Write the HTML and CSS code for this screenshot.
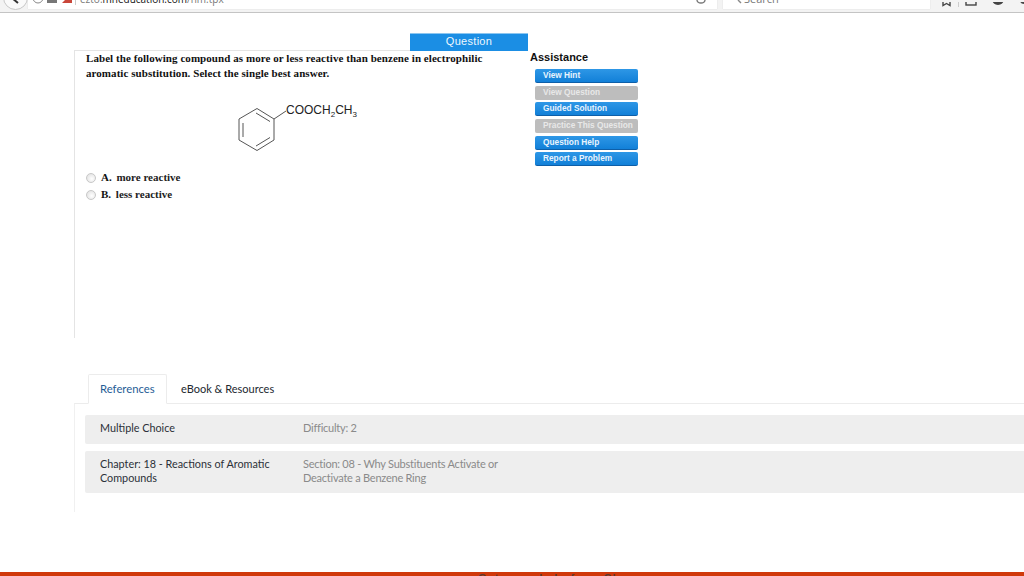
FILE: index.html
```html
<!DOCTYPE html>
<html lang="en">
<head>
<meta charset="utf-8">
<title>Question</title>
<link rel="stylesheet" href="styles.css">
</head>
<body>
<header class="toolbar">
  <div class="nav-back"><svg class="nav-arrow" width="14" height="14" viewBox="0 0 14 14"><path d="M9 -4 L3 1 L9 6" fill="none" stroke="#333" stroke-width="2"/></svg></div>
  <div class="url-box">
    <svg class="site-icons" width="50" height="9" viewBox="0 0 50 9"><circle cx="10" cy="-2" r="5" fill="none" stroke="#888"/><rect x="19" y="-3" width="10" height="6" fill="#777"/><path d="M34 3 L39 -2 L44 -3 V3 Z" fill="#c9463a"/><path d="M47.500 0 V5" stroke="#ccc"/></svg>
    <span class="url-text"><span class="url-dim">ezto.</span>mheducation.com<span class="url-dim">/hm.tpx</span></span>
    <svg class="reload" width="12" height="9" viewBox="0 0 12 9"><path d="M2 0 A4 3 0 0 0 10 0" fill="none" stroke="#777" stroke-width="1.4"/></svg>
  </div>
  <div class="search-box">
    <svg class="magnifier" width="10" height="9" viewBox="0 0 10 9"><path d="M5 0 L8 3" stroke="#888" stroke-width="1.4"/></svg>
    <span class="search-text">Search</span>
  </div>
  <div class="tool-icons">
    <svg width="82" height="12" viewBox="0 0 82 12"><path d="M1 -2 V3.500 L4.500 1.500 L8 3.500 V-2" fill="none" stroke="#444" stroke-width="1.4"/><path d="M16.500 0 V5" stroke="#ccc"/><rect x="24" y="-4" width="10" height="7" fill="none" stroke="#444" stroke-width="1.4"/><circle cx="56" cy="-3" r="6" fill="#444"/><circle cx="82" cy="-2" r="4" fill="#444"/></svg>
  </div>
</header>

<main class="page">
  <section class="question-area">
    <div class="question-col">
      <div class="tab-row"><div class="question-tab">Question</div></div>
      <div class="question-panel">
        <p class="prompt">Label the following compound as more or less reactive than benzene in electrophilic aromatic substitution. Select the single best answer.</p>
        <div class="structure">
          <svg width="150" height="52" viewBox="0 0 150 52">
            <g fill="none" stroke="#555" stroke-width="1">
              <path d="M19 14 L37 3.500 L54 14 L54 35 L37 45.500 L19 35 Z"/>
              <path d="M36 8 L50 16.500"/>
              <path d="M23 18 L23 32"/>
              <path d="M36 41 L50 32.500"/>
              <path d="M54 14 L66 6"/>
            </g>
            <text x="66" y="9" class="formula">COOCH<tspan class="sub" dy="3">2</tspan><tspan dy="-3">CH</tspan><tspan class="sub" dy="3">3</tspan></text>
          </svg>
        </div>
        <ul class="choices">
          <li class="choice"><span class="radio"></span><b class="choice-key">A.</b> more reactive</li>
          <li class="choice"><span class="radio"></span><b class="choice-key">B.</b> less reactive</li>
        </ul>
      </div>
    </div>
    <aside class="assist">
      <h2 class="assist-title">Assistance</h2>
      <a class="btn">View Hint</a>
      <a class="btn btn-off">View Question</a>
      <a class="btn">Guided Solution</a>
      <a class="btn btn-off">Practice This Question</a>
      <a class="btn">Question Help</a>
      <a class="btn">Report a Problem</a>
    </aside>
  </section>

  <section class="refs">
    <nav class="ref-tabs">
      <a class="ref-tab ref-tab-active">References</a>
      <a class="ref-tab">eBook &amp; Resources</a>
    </nav>
    <div class="ref-panel">
      <div class="ref-row">
        <div class="ref-main">Multiple Choice</div>
        <div class="ref-side">Difficulty: 2</div>
      </div>
      <div class="ref-row">
        <div class="ref-main">Chapter: 18 - Reactions of Aromatic Compounds</div>
        <div class="ref-side">Section: 08 - Why Substituents Activate or Deactivate a Benzene Ring</div>
      </div>
    </div>
  </section>
</main>

<footer class="bottom-bar"><span class="bottom-text">Get more help from Chegg</span></footer>
</body>
</html>
```

FILE: styles.css
```css
* { box-sizing: border-box; }
html, body { margin: 0; padding: 0; }
body {
  width: 1024px;
  height: 576px;
  overflow: hidden;
  display: flex;
  flex-direction: column;
  background: #fff;
  font-family: "Liberation Sans", Arial, sans-serif;
}

.toolbar {
  height: 13px;
  flex: none;
  display: flex;
  align-items: flex-start;
  background: #f3f3f3;
  border-bottom: 1px solid #c4c4c4;
  overflow: hidden;
}
.nav-back {
  width: 25px;
  height: 25px;
  margin: -15px 0 0 3px;
  padding: 11px 0 0 5px;
  border: 1px solid #c8c8c8;
  border-radius: 50%;
  background: #fafafa;
  flex: none;
}
.nav-arrow { display: block; overflow: visible; }
.url-box {
  width: 689px;
  height: 9px;
  flex: none;
  display: flex;
  background: #fff;
  box-shadow: 0 0 1px #ccc;
}
.site-icons { flex: none; }
.url-text {
  font: 10px/10px "Open Sans", sans-serif;
  color: #111;
  margin: -6px 0 0 2px;
  white-space: nowrap;
}
.url-dim { color: #777; }
.reload { margin-left: auto; margin-right: 10px; flex: none; }
.search-box {
  width: 207px;
  height: 9px;
  flex: none;
  display: flex;
  margin-left: 6px;
  background: #fff;
  box-shadow: 0 0 1px #ccc;
  padding-left: 10px;
  overflow: hidden;
}
.magnifier { flex: none; }
.search-text {
  display: block;
  font: 11px/11px "Open Sans", sans-serif;
  color: #777;
  margin: -7px 0 0 1px;
}
.tool-icons { margin-left: 12px; flex: none; }

.page { flex: 1; min-height: 0; display: flex; flex-direction: column; }

.question-area { display: flex; padding: 20px 0 0 74px; height: 361px; flex: none; }
.question-col { width: 454px; flex: none; }
.tab-row { display: flex; justify-content: flex-end; }
.question-tab {
  width: 118px;
  height: 18px;
  margin-bottom: -1px;
  position: relative;
  background: #1b8ee4;
  border-top: 1px solid #8cc6f0;
  color: #eef7fe;
  text-align: center;
  font-size: 11px;
  line-height: 15px;
  letter-spacing: 0.3px;
}
.question-panel {
  height: 288px;
  border-left: 1px solid #e4e4e4;
  border-top: 1px solid #e4e4e4;
  padding: 0 0 0 11px;
}
.prompt {
  margin: 0;
  width: 400px;
  font: bold 11px/15px "Liberation Serif", "Times New Roman", serif;
  letter-spacing: 0.06px;
  color: #111;
}
.structure { height: 52px; margin: 24px 0 0 134px; }
.structure svg { display: block; }
.formula { font: 12px "Liberation Sans", Arial, sans-serif; fill: #222; }
.sub { font-size: 8px; }

.choices { list-style: none; margin: 12px 0 0; padding: 0; }
.choice {
  height: 17px;
  display: flex;
  align-items: center;
  font: bold 11px/17px "Liberation Serif", "Times New Roman", serif;
  color: #222;
  white-space: pre;
}
.radio {
  width: 10px;
  height: 10px;
  margin-right: 5px;
  border-radius: 50%;
  border: 1px solid #c8c8c8;
  background: radial-gradient(circle at 60% 60%, #fff, #dcdcdc);
  flex: none;
}
.choice-key { margin-right: 2px; color: #111; }

.assist { width: 112px; padding-top: 17px; margin-left: 2px; }
.assist-title {
  margin: 0 0 5px;
  font-size: 11px;
  line-height: 14px;
  font-weight: bold;
  color: #111;
}
.btn {
  display: block;
  width: 103px;
  height: 14px;
  margin: 0 0 2.7px 5px;
  padding-left: 8px;
  border-radius: 2px;
  background: linear-gradient(#2e97e6, #1280d8);
  border-bottom: 1px solid #0e5fa8;
  color: #e9f4fd;
  font-size: 8.3px;
  line-height: 13px;
  font-weight: bold;
  white-space: nowrap;
}
.btn-off { background: #bdbdbd; border-bottom-color: #bdbdbd; color: #e8e8e8; }

.refs { flex: none; }
.ref-tabs { display: flex; padding-left: 88px; height: 30px; margin-bottom: -1px; position: relative; }
.ref-tab {
  height: 30px;
  padding: 0 13px;
  font: 11px/27px Lato, sans-serif;
  color: #22282f;
  border: 1px solid transparent;
  white-space: nowrap;
}
.ref-tab-active {
  color: #1f5d96;
  font-size: 11.3px;
  background: #fff;
  border-color: #ececec;
  border-bottom-color: #fff;
  border-radius: 2px 2px 0 0;
  padding: 0 11px;
  width: 79px;
}
.ref-panel {
  margin-left: 74px;
  height: 109px;
  border-top: 1px solid #ececec;
  border-left: 1px solid #f0f0f0;
  padding: 11px 0 0 10px;
}
.ref-row {
  display: flex;
  background: #eeeeee;
  margin-bottom: 7px;
  padding: 6px 0 9px 15px;
  border-radius: 2px 0 0 2px;
  font: 10.8px/13.5px Lato, sans-serif;
  min-height: 29px;
}
.ref-main { width: 203px; padding-right: 25px; color: #2b3038; }
.ref-side { width: 215px; padding-right: 10px; color: #8a8a8a; font-size: 11px; letter-spacing: -0.24px; }

.bottom-bar {
  margin-top: auto;
  height: 4px;
  flex: none;
  background: #d0390b;
  overflow: hidden;
  padding-left: 478px;
}
.bottom-text {
  display: block;
  font: bold 11px/12px "Liberation Sans", Arial, sans-serif;
  letter-spacing: 1.1px;
  color: #5a3a30;
  white-space: nowrap;
}
```
